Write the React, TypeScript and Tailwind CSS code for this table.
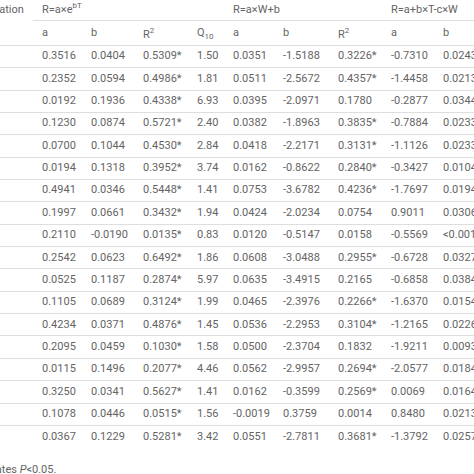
import React from "react";

const rows: string[][] = [
  ["0.3516", "0.0404", "0.5309*", "1.50", "0.0351", "-1.5188", "0.3226*", "-0.7310", "0.0243"],
  ["0.2352", "0.0594", "0.4986*", "1.81", "0.0511", "-2.5672", "0.4357*", "-1.4458", "0.0213"],
  ["0.0192", "0.1936", "0.4338*", "6.93", "0.0395", "-2.0971", "0.1780", "-0.2877", "0.0344"],
  ["0.1230", "0.0874", "0.5721*", "2.40", "0.0382", "-1.8963", "0.3835*", "-0.7884", "0.0233"],
  ["0.0700", "0.1044", "0.4530*", "2.84", "0.0418", "-2.2171", "0.3131*", "-1.1126", "0.0233"],
  ["0.0194", "0.1318", "0.3952*", "3.74", "0.0162", "-0.8622", "0.2840*", "-0.3427", "0.0104"],
  ["0.4941", "0.0346", "0.5448*", "1.41", "0.0753", "-3.6782", "0.4236*", "-1.7697", "0.0194"],
  ["0.1997", "0.0661", "0.3432*", "1.94", "0.0424", "-2.0234", "0.0754", "0.9011", "0.0306"],
  ["0.2110", "-0.0190", "0.0135*", "0.83", "0.0120", "-0.5147", "0.0158", "-0.5569", "<0.001"],
  ["0.2542", "0.0623", "0.6492*", "1.86", "0.0608", "-3.0488", "0.2955*", "-0.6728", "0.0327"],
  ["0.0525", "0.1187", "0.2874*", "5.97", "0.0635", "-3.4915", "0.2165", "-0.6858", "0.0384"],
  ["0.1105", "0.0689", "0.3124*", "1.99", "0.0465", "-2.3976", "0.2266*", "-1.6370", "0.0154"],
  ["0.4234", "0.0371", "0.4876*", "1.45", "0.0536", "-2.2953", "0.3104*", "-1.2165", "0.0226"],
  ["0.2095", "0.0459", "0.1030*", "1.58", "0.0500", "-2.3704", "0.1832", "-1.9211", "0.0093"],
  ["0.0115", "0.1496", "0.2077*", "4.46", "0.0562", "-2.9957", "0.2694*", "-2.0577", "0.0184"],
  ["0.3250", "0.0341", "0.5627*", "1.41", "0.0162", "-0.3599", "0.2569*", "0.0069", "0.0164"],
  ["0.1078", "0.0446", "0.0515*", "1.56", "-0.0019", "0.3759", "0.0014", "0.8480", "0.0213"],
  ["0.0367", "0.1229", "0.5281*", "3.42", "0.0551", "-2.7811", "0.3681*", "-1.3792", "0.0257"],
];

const colW = [
  "w-[71px]",
  "w-[49px]",
  "w-[52px]",
  "w-[54px]",
  "w-[36px]",
  "w-[50px]",
  "w-[55px]",
  "w-[53px]",
  "w-[52px]",
  "w-[60px]",
];

export default function App() {
  return (
    <div
      className="w-[474px] h-[474px] overflow-hidden bg-white text-[#646464] text-[11px]"
      style={{ fontFamily: "Roboto, 'Liberation Sans', sans-serif" }}
    >
      <div className="-ml-[38px] w-[700px]">
        {/* header row 1 */}
        <div className="flex h-[21px]">
          <div className={`${colW[0]} shrink-0 pl-[9px] flex items-center whitespace-nowrap`}>Vegetation</div>
          <div className="w-[191px] shrink-0 pl-[9px] flex items-center border-b border-[#dedede] whitespace-nowrap">
            <span>
              R=a×e<sup className="static align-super text-[8px]">bT</sup>
            </span>
          </div>
          <div className="w-[158px] shrink-0 pl-[9px] flex items-center border-b border-[#dedede] whitespace-nowrap">
            R=a×W+b
          </div>
          <div className="w-[280px] shrink-0 pl-[9px] flex items-center border-b border-[#dedede] whitespace-nowrap">
            R=a+b×T-c×W
          </div>
        </div>
        {/* header row 2 */}
        <div className="flex h-[25px] border-b border-[#dedede]">
          <div className={`${colW[0]} shrink-0`} />
          <div className={`${colW[1]} shrink-0 pl-[9px] flex items-center`}>a</div>
          <div className={`${colW[2]} shrink-0 pl-[9px] flex items-center`}>b</div>
          <div className={`${colW[3]} shrink-0 pl-[9px] flex items-center pt-[5px]`}>
            <span>
              R<sup className="static align-super text-[8px]">2</sup>
            </span>
          </div>
          <div className={`${colW[4]} shrink-0 pl-[9px] flex items-center`}>
            <span>
              Q<sub className="static align-sub text-[8px]">10</sub>
            </span>
          </div>
          <div className={`${colW[5]} shrink-0 pl-[9px] flex items-center`}>a</div>
          <div className={`${colW[6]} shrink-0 pl-[9px] flex items-center`}>b</div>
          <div className={`${colW[7]} shrink-0 pl-[9px] flex items-center pt-[5px]`}>
            <span>
              R<sup className="static align-super text-[8px]">2</sup>
            </span>
          </div>
          <div className={`${colW[8]} shrink-0 pl-[9px] flex items-center`}>a</div>
          <div className={`${colW[9]} shrink-0 pl-[9px] flex items-center`}>b</div>
        </div>
        {rows.map((r, i) => (
          <div
            key={i}
            className={`flex h-[22.35px] ${i < rows.length - 1 ? "border-b border-[#dedede]" : ""}`}
          >
            <div className={`${colW[0]} shrink-0`} />
            {r.map((v, j) => (
              <div
                key={j}
                className={`${colW[j + 1]} shrink-0 pl-[9px] flex items-center whitespace-nowrap`}
              >
                {v}
              </div>
            ))}
          </div>
        ))}
        <div className="pl-[3px] pt-[14px] whitespace-nowrap">
          * indicates <i>P</i>&lt;0.05.
        </div>
      </div>
    </div>
  );
}
